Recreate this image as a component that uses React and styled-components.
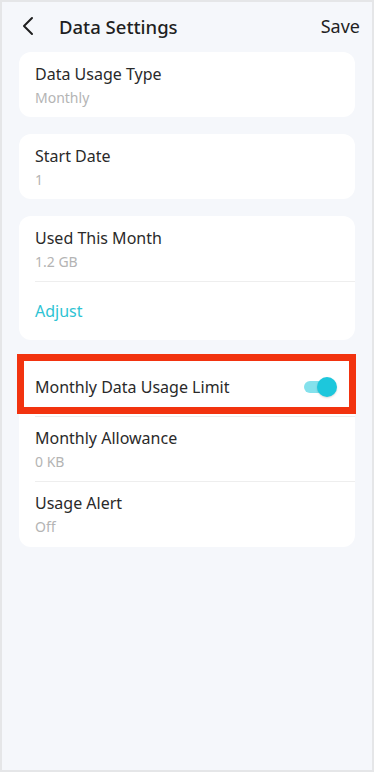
import React from "react";
import styled, { createGlobalStyle } from "styled-components";

const Global = createGlobalStyle`
  html, body { margin: 0; padding: 0; background: #e5e6e8; }
  body { font-family: "Noto Sans", "Liberation Sans", sans-serif; }
  * { box-sizing: border-box; }
`;

const Frame = styled.div`
  margin: 2px;
  height: 768px;
  background: #f5f7fb;
  display: flex;
  flex-direction: column;
  overflow: hidden;
`;

const Header = styled.div`
  height: 48px;
  display: flex;
  align-items: center;
  padding: 0 12px 0 18px;
  color: #1f1f1f;
`;

const Back = styled.button`
  border: 0;
  background: none;
  padding: 0;
  width: 16px;
  height: 24px;
  display: flex;
  align-items: center;
  justify-content: center;
  color: #1f1f1f;
`;

const Title = styled.h1`
  margin: 0 0 0 23px;
  font-size: 18.5px;
  font-weight: 500;
  flex: 1;
`;

const Save = styled.span`
  font-size: 18px;
  font-weight: 400;
`;

const List = styled.div`
  display: flex;
  flex-direction: column;
  gap: 17px;
  padding: 2px 17px 0 17px;
`;

const Card = styled.div`
  background: #fff;
  border-radius: 12px;
  display: flex;
  flex-direction: column;
  margin-top: ${(p) => p.$offset || 0}px;
`;

const Row = styled.div`
  position: relative;
  padding: ${(p) => (p.$compact ? "0 16px" : "11px 16px 9px")};
  min-height: ${(p) => p.$h || 65}px;
  display: flex;
  flex-direction: ${(p) => (p.$inline ? "row" : "column")};
  align-items: ${(p) => (p.$inline ? "center" : "flex-start")};
  justify-content: ${(p) => (p.$inline ? "space-between" : "flex-start")};
  ${(p) =>
    p.$divider &&
    `&::before { content: ""; position: absolute; left: 16px; right: 0; top: 0; height: 1px; background: #eeeeee; }`}
`;

const Highlight = styled.div`
  position: absolute;
  top: -4px;
  left: -2px;
  right: -1px;
  bottom: 2px;
  border: 7px solid #f2330f;
  pointer-events: none;
`;

const Label = styled.div`
  font-size: 16px;
  line-height: 22px;
  color: #2a2a2a;
`;

const Value = styled.div`
  font-size: 14px;
  line-height: 20px;
  margin-top: 3px;
  color: #b4b4b4;
`;

const Link = styled.div`
  font-size: 16px;
  line-height: 22px;
  color: #2ec3d3;
`;

const Toggle = styled.div`
  position: relative;
  width: 33px;
  height: 20px;
  margin-right: 2px;
  &::before {
    content: "";
    position: absolute;
    left: 0;
    right: 6px;
    top: 4px;
    height: 12px;
    border-radius: 6px;
    background: #84e1ec;
  }
  &::after {
    content: "";
    position: absolute;
    right: 0;
    top: 0;
    width: 20px;
    height: 20px;
    border-radius: 50%;
    background: #1dc7dc;
    box-shadow: 0 1px 2px rgba(0, 0, 0, 0.15);
  }
`;

export default function App() {
  return (
    <>
      <Global />
      <Frame>
        <Header>
          <Back aria-label="Back">
            <svg width="12" height="20" viewBox="0 0 12 20" fill="none">
              <path d="M10 2 L2 10 L10 18" stroke="currentColor" strokeWidth="2" strokeLinecap="round" strokeLinejoin="round" />
            </svg>
          </Back>
          <Title>Data Settings</Title>
          <Save>Save</Save>
        </Header>
        <List>
          <Card>
            <Row>
              <Label>Data Usage Type</Label>
              <Value>Monthly</Value>
            </Row>
          </Card>
          <Card>
            <Row>
              <Label>Start Date</Label>
              <Value>1</Value>
            </Row>
          </Card>
          <Card>
            <Row>
              <Label>Used This Month</Label>
              <Value>1.2 GB</Value>
            </Row>
            <Row $divider $inline $compact $h={59}>
              <Link>Adjust</Link>
            </Row>
          </Card>
          <Card $offset={1}>
            <Row $inline $compact $h={58}>
              <Label>Monthly Data Usage Limit</Label>
              <Toggle />
              <Highlight />
            </Row>
            <Row $divider>
              <Label>Monthly Allowance</Label>
              <Value>0 KB</Value>
            </Row>
            <Row $divider $h={66}>
              <Label>Usage Alert</Label>
              <Value>Off</Value>
            </Row>
          </Card>
        </List>
      </Frame>
    </>
  );
}
